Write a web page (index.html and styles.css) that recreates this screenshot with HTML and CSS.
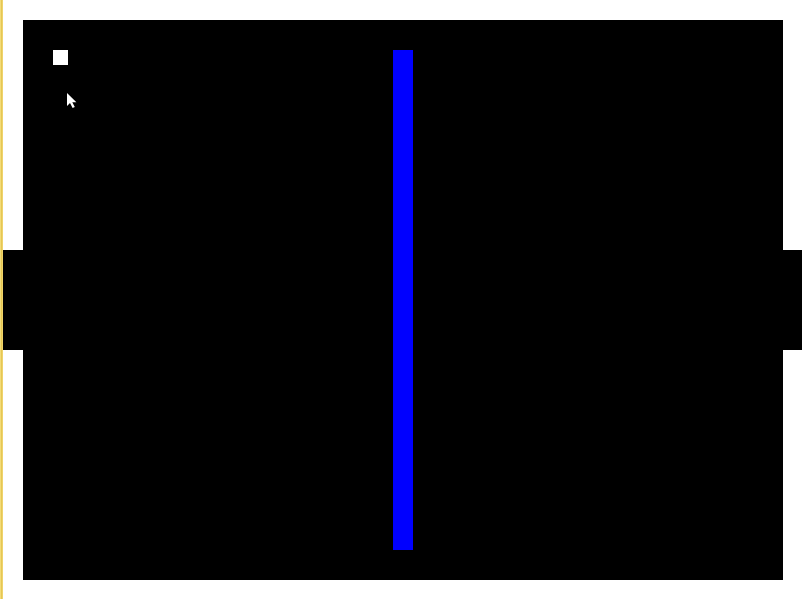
FILE: index.html
```html
<!DOCTYPE html>
<html>
<head>
<meta charset="utf-8">
<title>Game</title>
<link rel="stylesheet" href="styles.css">
</head>
<body>
<div class="page">
  <div class="stripe"></div>
  <div class="stage">
    <div class="tab tab-left"></div>
    <div class="board">
      <div class="ball"></div>
      <div class="paddle"></div>
      <svg class="cursor" width="11" height="16" viewBox="0 0 11 16">
        <path d="M0 0 L0 13 L3 10 L5.6 15 L7.8 14 L5.3 9.3 L9.4 9.3 Z" fill="#fff"/>
      </svg>
    </div>
    <div class="tab tab-right"></div>
  </div>
</div>
</body>
</html>
```
FILE: styles.css
```css
html, body {
  margin: 0;
  padding: 0;
  background: #fff;
  font-family: "Liberation Sans", Arial, sans-serif;
}
.page {
  display: flex;
  width: 802px;
  height: 599px;
  overflow: hidden;
}
.stripe {
  width: 3px;
  flex: none;
  background: linear-gradient(to right, #f3dc78 0, #f3dc78 1px, #e6c655 1px, #e6c655 2px, #efd46a 2px);
}
.stage {
  display: flex;
  align-items: flex-start;
  padding-top: 20px;
}
.tab {
  background: #000;
  height: 100px;
  margin-top: 230px;
  flex: none;
}
.tab-left { width: 20px; }
.tab-right { width: 19px; }
.board {
  position: relative;
  width: 760px;
  height: 560px;
  background: #000;
  flex: none;
}
.ball {
  position: absolute;
  left: 30px;
  top: 30px;
  width: 15px;
  height: 15px;
  background: #fff;
}
.paddle {
  position: absolute;
  left: 370px;
  top: 30px;
  width: 20px;
  height: 500px;
  background: #0000ff;
}
.cursor {
  position: absolute;
  left: 44px;
  top: 73px;
}
```
